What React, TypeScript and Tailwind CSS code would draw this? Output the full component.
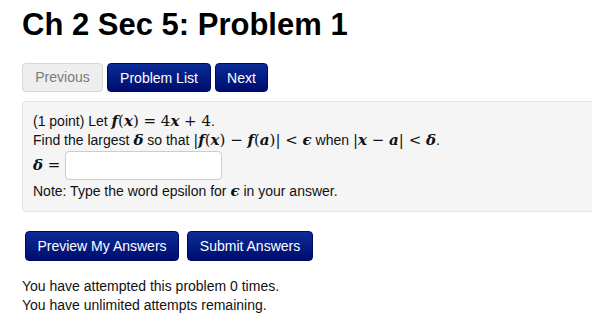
const blueBtn =
  'rounded border border-[#00095e] bg-gradient-to-b from-[#0d2c97] to-[#000b6f] text-white text-[14px] leading-none'

function M({ children }: { children: React.ReactNode }) {
  return (
    <span className="font-['DejaVu_Serif',serif] text-[15px] italic font-bold">{children}</span>
  )
}

function R({ children }: { children: React.ReactNode }) {
  return <span className="font-['DejaVu_Serif',serif] text-[15px] not-italic">{children}</span>
}

export default function App() {
  return (
    <div className="h-[333px] w-[592px] overflow-hidden bg-white pl-[22px] font-['Liberation_Sans',Arial,sans-serif] text-[14px] text-[#111]">
      <h1 className="pt-[7px] text-[31px] font-bold leading-[36px] text-black">Ch 2 Sec 5: Problem 1</h1>

      <div className="mt-[20px] flex gap-[4px]">
        <button className="h-[29px] w-[81px] rounded border border-[#d6d6d6] bg-[#eeeeee] text-[14px] text-[#7a7a7a]">
          Previous
        </button>
        <button className={`${blueBtn} h-[29px] w-[104px]`}>Problem List</button>
        <button className={`${blueBtn} h-[29px] w-[53px]`}>Next</button>
      </div>

      <div className="mt-[9px] h-[111px] w-[600px] rounded border border-[#e3e3e3] bg-[#f5f5f5] pl-[10px] pt-[10px] leading-[19px]">
        <div>
          (1 point) Let <M>f</M>
          <R>(</R>
          <M>x</M>
          <R>) = 4</R>
          <M>x</M>
          <R> + 4</R>.
        </div>
        <div>
          Find the largest <M>δ</M> so that <R>|</R>
          <M>f</M>
          <R>(</R>
          <M>x</M>
          <R>) − </R>
          <M>f</M>
          <R>(</R>
          <M>a</M>
          <R>)| &lt; </R>
          <M>ϵ</M> when <R>|</R>
          <M>x</M>
          <R> − </R>
          <M>a</M>
          <R>| &lt; </R>
          <M>δ</M>.
        </div>
        <div className="mt-[1px] flex items-center gap-[5px]">
          <span>
            <M>δ</M>
            <R> =</R>
          </span>
          <input className="h-[29px] w-[157px] rounded border border-[#cccccc] bg-white" />
        </div>
        <div className="mt-[2px]">
          Note: Type the word epsilon for <M>ϵ</M> in your answer.
        </div>
      </div>

      <div className="ml-[3px] mt-[19px] flex gap-[8px]">
        <button className={`${blueBtn} h-[30px] w-[154px]`}>Preview My Answers</button>
        <button className={`${blueBtn} h-[30px] w-[126px]`}>Submit Answers</button>
      </div>

      <div className="mt-[16px] leading-[19px]">
        <div>You have attempted this problem 0 times.</div>
        <div>You have unlimited attempts remaining.</div>
      </div>
    </div>
  )
}
